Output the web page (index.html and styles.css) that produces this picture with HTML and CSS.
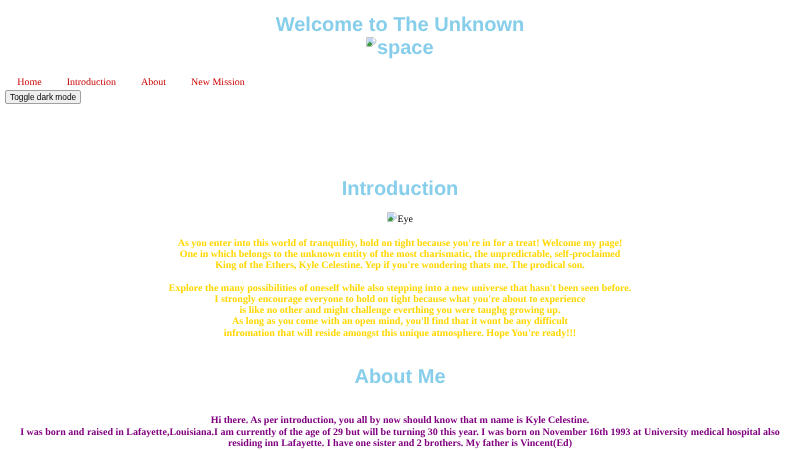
FILE: index.html
```html
<!DOCTYPE html>
<html lang="en">
<head>
<meta charset="utf-8">
<title>Welcome to The Unknown</title>
<link rel="stylesheet" href="styles.css">
</head>
<body>
<header class="masthead">
  <h1 class="title">Welcome to The Unknown<br><svg class="broken" viewBox="0 0 16 16" aria-hidden="true"><path d="M1 1H11L15 5V8.500L11 11.500L8 15H1Z" fill="#fff" stroke="#a8a8a8" stroke-width="1.200"/><path d="M2 2H10.500V6.500H14V8L10.500 10.500L7 14H2Z" fill="#bcd4f5"/><path d="M2 14V10.500L6 7L10 10.500L7 14Z" fill="#3f9a3f"/></svg>space</h1>
</header>
<nav class="nav">
  <a href="#home">Home</a>
  <a href="#introduction">Introduction</a>
  <a href="#about">About</a>
  <a href="#mission">New Mission</a>
</nav>
<button class="toggle" type="button">Toggle dark mode</button>
<main>
  <section class="intro" id="introduction">
    <h2 class="heading">Introduction</h2>
    <p class="eye"><svg class="broken" viewBox="0 0 16 16" aria-hidden="true"><path d="M1 1H11L15 5V8.500L11 11.500L8 15H1Z" fill="#fff" stroke="#a8a8a8" stroke-width="1.200"/><path d="M2 2H10.500V6.500H14V8L10.500 10.500L7 14H2Z" fill="#bcd4f5"/><path d="M2 14V10.500L6 7L10 10.500L7 14Z" fill="#3f9a3f"/></svg>Eye</p>
    <p class="gold">As you enter into this world of tranquility, hold on tight because you're in for a treat! Welcome my page!<br>
    One in which belongs to the unknown entity of the most charismatic, the unpredictable, self-proclaimed<br>
    King of the Ethers, Kyle Celestine. Yep if you're wondering thats me. The prodical son.<br><br>
    Explore the many possibilities of oneself while also stepping into a new universe that hasn't been seen before.<br>
    I strongly encourage everyone to hold on tight because what you're about to experience<br>
    is like no other and might challenge everthing you were taughg growing up.<br>
    As long as you come with an open mind, you'll find that it wont be any difficult<br>
    infromation that will reside amongst this unique atmosphere. Hope You're ready!!!</p>
  </section>
  <section class="about" id="about">
    <h2 class="heading">About Me</h2>
    <p class="purple">Hi there. As per introduction, you all by now should know that m name is Kyle Celestine.<br>
    I was born and raised in Lafayette,Louisiana.I am currently of the age of 29 but will be turning 30 this year. I was born on November 16th 1993 at University medical hospital also residing inn Lafayette. I have one sister and 2 brothers. My father is Vincent(Ed)<br>
    and my mother is Theresa. I have always been interested in many things while growing up.</p>
  </section>
</main>
</body>
</html>
```
FILE: styles.css
```css
html {
  height: 100%;
  overflow: hidden;
  background: #fff;
}
body {
  margin: 5px;
  font-family: "Liberation Serif", serif;
  font-size: 10px;
  line-height: 11.25px;
  color: #000;
  text-rendering: geometricPrecision;
  filter: blur(0.4px);
}
.masthead {
  text-align: center;
}
.title {
  margin: 9px 0 17.500px;
  font-family: "Liberation Sans", sans-serif;
  font-size: 20px;
  line-height: 22.500px;
  font-weight: bold;
  color: #87ceeb;
}
.broken {
  width: 10.500px;
  height: 10.500px;
  vertical-align: -1px;
}
.title .broken {
  vertical-align: 6.500px;
}
.nav {
  display: flex;
  gap: 25px;
  padding: 0 12.2px;
  margin-bottom: 2.500px;
}
.nav a {
  color: #c00;
  text-decoration: none;
}
.toggle {
  display: block;
  padding: 1px 4px;
  border: 1px solid #a0a0a0;
  border-radius: 2px;
  background: #efefef;
  font-family: "Liberation Sans", sans-serif;
  font-size: 8.333px;
  line-height: 10px;
  color: #000;
}
.intro {
  margin-top: 73.500px;
  text-align: center;
}
.heading {
  margin: 0 0 11px;
  font-family: "Liberation Sans", sans-serif;
  font-size: 20px;
  line-height: 23px;
  font-weight: bold;
  color: #87ceeb;
}
.eye {
  margin: 0 0 13px;
}
.gold {
  margin: 0;
  font-weight: bold;
  color: #ffd700;
}
.about {
  margin-top: 27.500px;
  text-align: center;
}
.about .heading {
  margin-bottom: 26px;
}
.purple {
  margin: 0;
  font-weight: bold;
  color: #800080;
}
```
